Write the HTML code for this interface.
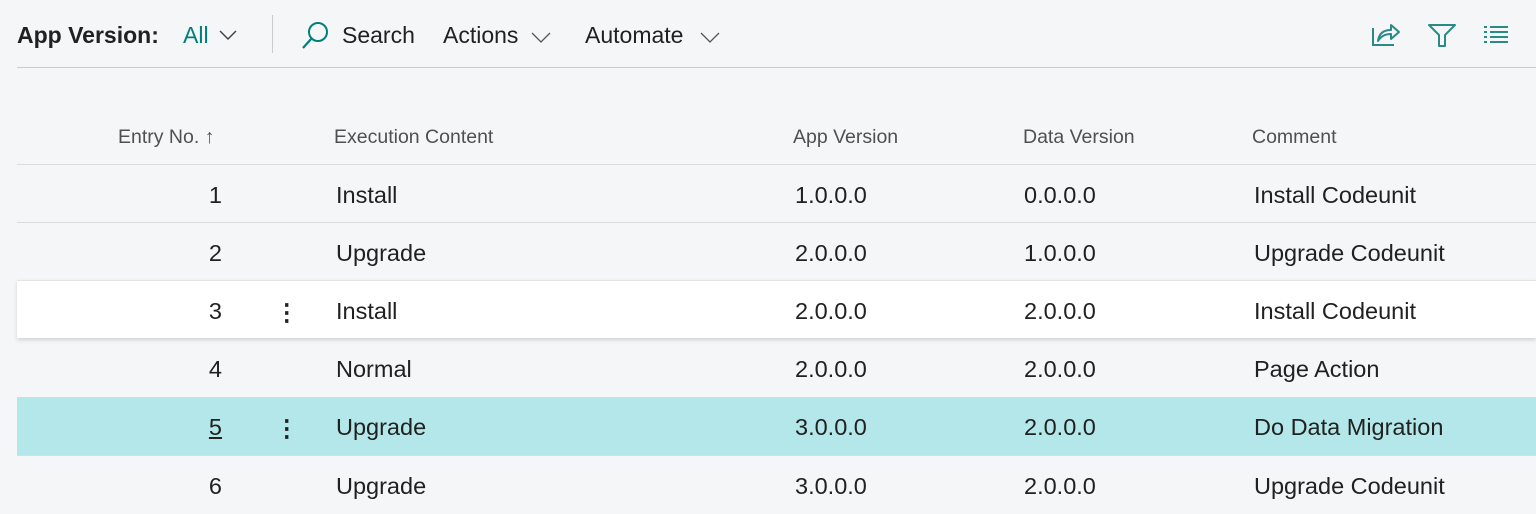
<!DOCTYPE html>
<html><head><meta charset="utf-8"><style>
*{margin:0;padding:0;box-sizing:border-box}
body{width:1536px;height:514px;background:#f5f6f8;font-family:"Liberation Sans",sans-serif;color:#212121;position:relative;overflow:hidden}
.a{position:absolute;white-space:nowrap}
.tb{font-size:23px;top:22px}
.hd{font-size:19.5px;color:#505050;top:126px}
.row{position:absolute;left:17px;width:1519px;height:58px;border-top:1px solid #dcdcdc}
.row span{position:absolute;top:17px;font-size:23.5px;color:#212121}
.n{right:1314px;text-align:right}
.dots{left:258px;font-weight:bold}
</style></head><body>
<div class="a tb" style="left:17px;font-weight:bold;color:#212121">App Version:</div>
<div class="a tb" style="left:183px;color:#00807a">All</div>
<svg class="a" style="left:218px;top:28px" width="20" height="14"><path d="M2 3l8 8 8-8" fill="none" stroke="#444" stroke-width="1.5"/></svg>
<div class="a" style="left:272px;top:15px;width:1px;height:38px;background:#ccc"></div>
<svg class="a" style="left:300px;top:20px" width="32" height="32"><circle cx="18" cy="12" r="9" fill="none" stroke="#00807a" stroke-width="2"/><path d="M11.5 18.5L3 28" stroke="#00807a" stroke-width="2.2"/></svg>
<div class="a tb" style="left:342px">Search</div>
<div class="a tb" style="left:443px">Actions</div>
<svg class="a" style="left:530px;top:30px" width="22" height="14"><path d="M2 3l9 9 9-9" fill="none" stroke="#555" stroke-width="1.3"/></svg>
<div class="a tb" style="left:585px">Automate</div>
<svg class="a" style="left:699px;top:30px" width="22" height="14"><path d="M2 3l9 9 9-9" fill="none" stroke="#555" stroke-width="1.3"/></svg>
<svg class="a" style="left:1370px;top:20px" width="32" height="28"><path d="M3 8v17h21" fill="none" stroke="#2a8a86" stroke-width="2"/><path d="M8 21c1-8 6-11 13-11V5l8 7-8 7v-5c-6 0-10 2-13 7z" fill="none" stroke="#2a8a86" stroke-width="2" stroke-linejoin="round"/></svg>
<svg class="a" style="left:1427px;top:22px" width="30" height="26"><path d="M2 3h26L18 13v11h-6V13z" fill="none" stroke="#2a8a86" stroke-width="2" stroke-linejoin="round"/></svg>
<svg class="a" style="left:1483px;top:25px" width="26" height="20"><g stroke="#2a8a86" stroke-width="2"><path d="M1 2h3M7 2h18M1 7h3M7 7h18M1 12h3M7 12h18M1 17h3M7 17h18"/></g></svg>
<div class="a" style="left:17px;top:67px;width:1519px;height:1px;background:#ccc"></div>
<div class="a hd" style="left:118px">Entry No. ↑</div>
<div class="a hd" style="left:334px">Execution Content</div>
<div class="a hd" style="left:793px">App Version</div>
<div class="a hd" style="left:1023px">Data Version</div>
<div class="a hd" style="left:1252px">Comment</div>

<div class="row" style="top:164px"><span class="n">1</span><span style="left:319px">Install</span><span style="left:778px">1.0.0.0</span><span style="left:1007px">0.0.0.0</span><span style="left:1237px">Install Codeunit</span></div>
<div class="row" style="top:222px"><span class="n">2</span><span style="left:319px">Upgrade</span><span style="left:778px">2.0.0.0</span><span style="left:1007px">1.0.0.0</span><span style="left:1237px">Upgrade Codeunit</span></div>
<div class="row" style="top:280px;background:#fff;border-top:1px solid #e4e4e4;box-shadow:0 2px 4px rgba(0,0,0,.15)"><span class="n">3</span><span class="dots">⋮</span><span style="left:319px">Install</span><span style="left:778px">2.0.0.0</span><span style="left:1007px">2.0.0.0</span><span style="left:1237px">Install Codeunit</span></div>
<div class="row" style="top:339px;border-top:none"><span class="n">4</span><span style="left:319px">Normal</span><span style="left:778px">2.0.0.0</span><span style="left:1007px">2.0.0.0</span><span style="left:1237px">Page Action</span></div>
<div class="row" style="top:397px;background:#b3e7ea;border-top:none"><span class="n" style="text-decoration:underline">5</span><span class="dots">⋮</span><span style="left:319px">Upgrade</span><span style="left:778px">3.0.0.0</span><span style="left:1007px">2.0.0.0</span><span style="left:1237px">Do Data Migration</span></div>
<div class="row" style="top:455px;border-top:1px solid #dcdcdc"><span class="n">6</span><span style="left:319px">Upgrade</span><span style="left:778px">3.0.0.0</span><span style="left:1007px">2.0.0.0</span><span style="left:1237px">Upgrade Codeunit</span></div>
</body></html>
